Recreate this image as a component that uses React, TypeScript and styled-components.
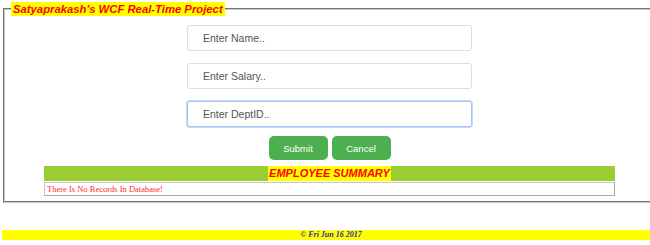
import styled, { createGlobalStyle } from 'styled-components';

const GlobalStyle = createGlobalStyle`
  body {
    margin: 0;
    overflow: hidden;
    background: #ffffff;
    font-family: 'Liberation Sans', Arial, sans-serif;
  }
`;

const App = () => {
  return (
    <Page>
      <GlobalStyle />
      <Frame>
        <Legend>Satyaprakash's WCF Real-Time Project</Legend>
        <Content>
          <Form>
            <Input placeholder="Enter Name.." />
            <Input placeholder="Enter Salary.." />
            <Input placeholder="Enter DeptID.." $focused />
            <Buttons>
              <Button>Submit</Button>
              <Button>Cancel</Button>
            </Buttons>
          </Form>
          <SummaryBar>
            <SummaryTitle>EMPLOYEE SUMMARY</SummaryTitle>
          </SummaryBar>
          <RecordsTable>
            <tbody>
              <tr>
                <EmptyCell>There Is No Records In Database!</EmptyCell>
              </tr>
            </tbody>
          </RecordsTable>
        </Content>
      </Frame>
      <Footer>
        <FooterText>© Fri Jun 16 2017</FooterText>
      </Footer>
    </Page>
  );
};
export default App;

const Page = styled.div`
  width: 650px;
  height: 245px;
  padding-top: 2px;
  box-sizing: border-box;
`;

const Frame = styled.fieldset`
  margin: 0 0 0 3px;
  padding: 0 0 5px 0;
  width: 647px;
  border: 2px groove #c8c8c8;
  border-right: none;
  box-sizing: border-box;
  min-width: 0;
`;

const Legend = styled.legend`
  margin-left: 6px;
  padding: 0 2px;
  background: #ffff00;
  color: #ff0000;
  font-family: 'Liberation Sans', Arial, sans-serif;
  font-size: 11.3px;
  font-weight: bold;
  font-style: italic;
  line-height: 14px;
`;

const Content = styled.div`
  width: 645px;
  padding-left: 4px;
  box-sizing: border-box;
  display: flex;
  flex-direction: column;
  align-items: center;
`;

const Form = styled.div`
  margin-top: 9px;
  display: flex;
  flex-direction: column;
  align-items: center;
  gap: 12px;
`;

const Input = styled.input<{ $focused?: boolean }>`
  width: 285px;
  height: 26px;
  box-sizing: border-box;
  padding: 0 0 0 15px;
  border: 1px solid ${(p) => (p.$focused ? '#a9c4f5' : '#dedede')};
  border-radius: 3px;
  box-shadow: ${(p) => (p.$focused ? '0 0 0 1px #c6d8f8' : 'none')};
  font-family: 'Liberation Sans', Arial, sans-serif;
  font-size: 10.5px;
  outline: none;
  &::placeholder {
    color: #555555;
  }
`;

const Buttons = styled.div`
  display: flex;
  gap: 4px;
  margin-top: -3px;
`;

const Button = styled.button`
  width: 59px;
  height: 24px;
  border: none;
  border-radius: 5px;
  background: #4caf50;
  color: #ffffff;
  font-family: 'Liberation Sans', Arial, sans-serif;
  font-size: 9.5px;
  padding: 0;
`;

const SummaryBar = styled.div`
  margin-top: 6px;
  width: 571px;
  height: 15px;
  background: #9acd32;
  display: flex;
  justify-content: center;
  align-items: center;
`;

const SummaryTitle = styled.span`
  background: #ffff00;
  color: #ff0000;
  font-family: 'Liberation Sans', Arial, sans-serif;
  font-size: 11px;
  font-weight: bold;
  font-style: italic;
  line-height: 15px;
  padding: 0 1px;
`;

const RecordsTable = styled.table`
  margin-top: 1px;
  width: 571px;
  border: 1px solid #c8c8c8;
  border-right-color: #a8a8a8;
  border-bottom-color: #a8a8a8;
  border-collapse: separate;
  border-spacing: 0;
`;

const EmptyCell = styled.td`
  padding: 0 2px;
  height: 12px;
  color: #ff2a2a;
  font-family: 'Liberation Serif', 'Times New Roman', serif;
  font-size: 8.5px;
  line-height: 12px;
`;

const Footer = styled.div`
  margin: 27px 0 0 2px;
  padding-left: 10px;
  height: 10px;
  background: #ffff00;
  display: flex;
  justify-content: center;
  align-items: center;
`;

const FooterText = styled.span`
  color: #2b2bb0;
  font-family: 'Liberation Serif', 'Times New Roman', serif;
  font-size: 8px;
  font-weight: bold;
  font-style: italic;
  line-height: 10px;
`;
